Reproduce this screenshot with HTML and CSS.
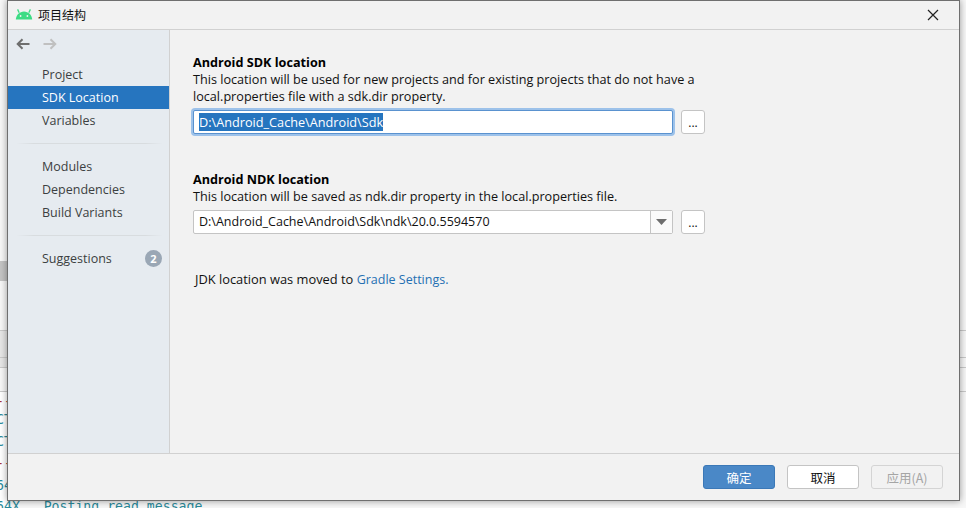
FILE: index.html
```html
<!DOCTYPE html>
<html lang="zh">
<head>
<meta charset="utf-8">
<title>项目结构</title>
<link rel="stylesheet" href="styles.css">
</head>
<body>
<div class="backdrop">
  <div class="bg-band band-a"></div>
  <div class="bg-band band-b"></div>
  <div class="bg-band band-c"></div>
  <div class="bg-line line-a"></div>
  <div class="bg-line line-b"></div>
  <div class="bg-line line-c"></div>
  <div class="bg-line line-d"></div>
  <span class="bg-code c1 red">--&gt;</span>
  <span class="bg-code c2 teal">CT</span>
  <span class="bg-code c3 teal">CT</span>
  <span class="bg-code c4 red">--&gt;</span>
  <span class="bg-code c5 teal">64</span>
  <span class="bg-code c6 teal">64X   Posting read message</span>
</div>
<div class="dialog">
  <header class="titlebar">
    <svg class="droid" width="18" height="12" viewBox="0 0 18 12">
      <path d="M.8 11.500C1.100 7 4.500 3.400 9 3.400s7.900 3.600 8.200 8.100Z" fill="#3ddc84"/>
      <path d="M4.200 4.800 2.600 1.400M13.800 4.800l1.600-3.400" stroke="#3ddc84" stroke-width="1.300" fill="none"/>
      <circle cx="5.600" cy="8" r=".9" fill="#f2f2f2"/>
      <circle cx="12.400" cy="8" r=".9" fill="#f2f2f2"/>
    </svg>
    <span class="title">项目结构</span>
    <svg class="close" width="12" height="12" viewBox="0 0 12 12">
      <path d="M1 1l10 10M11 1 1 11" stroke="#222" stroke-width="1.200" fill="none"/>
    </svg>
  </header>
  <div class="main">
    <nav class="side">
      <div class="arrows">
        <svg width="14" height="12" viewBox="0 0 14 12"><path d="M13.500 6H2M6.500 1.200 1.700 6l4.800 4.800" stroke="#6e6e6e" stroke-width="2" fill="none"/></svg>
        <svg width="14" height="12" viewBox="0 0 14 12"><path d="M.5 6H12M7.500 1.200 12.300 6l-4.800 4.800" stroke="#c0c0c0" stroke-width="2" fill="none"/></svg>
      </div>
      <ul class="group">
        <li>Project</li>
        <li class="active">SDK Location</li>
        <li>Variables</li>
      </ul>
      <ul class="group">
        <li>Modules</li>
        <li>Dependencies</li>
        <li>Build Variants</li>
      </ul>
      <ul class="group">
        <li class="with-badge">Suggestions<span class="badge">2</span></li>
      </ul>
    </nav>
    <section class="content">
      <div class="block sdk">
        <h2>Android SDK location</h2>
        <p>This location will be used for new projects and for existing projects that do not have a<br>local.properties file with a sdk.dir property.</p>
        <div class="field-row">
          <div class="input focused"><span class="selected">D:\Android_Cache\Android\Sdk</span></div>
          <button class="dots">...</button>
        </div>
      </div>
      <div class="block ndk">
        <h2>Android NDK location</h2>
        <p>This location will be saved as ndk.dir property in the local.properties file.</p>
        <div class="field-row">
          <div class="input combo">
            <span class="value">D:\Android_Cache\Android\Sdk\ndk\20.0.5594570</span>
            <span class="caret"><svg width="11" height="6" viewBox="0 0 11 6"><path d="M0 0h11L5.500 6Z" fill="#6e6e6e"/></svg></span>
          </div>
          <button class="dots">...</button>
        </div>
      </div>
      <p class="jdk">JDK location was moved to <a>Gradle Settings.</a></p>
    </section>
  </div>
  <footer class="footer">
    <button class="btn primary">确定</button>
    <button class="btn">取消</button>
    <button class="btn disabled">应用(A)</button>
  </footer>
</div>
</body>
</html>
```
FILE: styles.css
```css
* { box-sizing: border-box; }
html, body { margin: 0; height: 100%; overflow: hidden; }
body {
  position: relative;
  width: 966px;
  height: 508px;
  background: #f2f2f2;
  font-family: "Open Sans", "Noto Sans CJK SC", sans-serif;
  font-size: 12.5px;
  color: #1e1e1e;
}
.backdrop { position: absolute; inset: 0; background: #f7f7f7; }
.bg-band { position: absolute; left: 0; width: 8px; }
.band-a { top: 261px; height: 20px; background: #c4c4c4; }
.band-b { top: 331px; height: 36px; background: #e6e6e6; }
.band-c { top: 392px; height: 116px; background: #fff; }
.bg-line { position: absolute; left: 0; right: 0; height: 1px; background: #c9c9c9; }
.line-a { top: 330px; }
.line-b { top: 357px; }
.line-c { top: 367px; }
.line-d { top: 391px; }
.bg-code { position: absolute; left: -4px; font: 13.2px "DejaVu Sans Mono", monospace; white-space: pre; }
.red { color: #a33; }
.teal { color: #2a8a9a; }
.c1 { top: 394px; }
.c2 { top: 412px; }
.c3 { top: 434px; }
.c4 { top: 456px; }
.c5 { top: 478px; }
.c6 { top: 499px; }

.dialog {
  position: absolute;
  left: 7px;
  top: 0;
  width: 953px;
  height: 501px;
  display: flex;
  flex-direction: column;
  background: #f2f2f2;
  border: 1px solid #6f6f6f;
  box-shadow: 0 0 7px rgba(0, 0, 0, .4);
}
.titlebar {
  flex: none;
  height: 29px;
  display: flex;
  align-items: center;
  padding: 0 20px 0 7px;
  border-bottom: 1px solid #d1d1d1;
}
.droid { flex: none; margin-top: -2px; }
.title { margin-left: 5px; font-size: 12px; color: #111; }
.close { margin-left: auto; }
.main { flex: 1; display: flex; min-height: 0; }
.side {
  flex: none;
  width: 162px;
  background: #e6ebf0;
  border-right: 1px solid #d1d1d1;
  color: #3c3f41;
}
.arrows { display: flex; gap: 13px; padding: 8px 0 0 8px; height: 33px; }
.group { list-style: none; margin: 0 0 11px; padding: 0; }
.group + .group::before {
  content: "";
  display: block;
  height: 1px;
  margin: 0 6px 11px 8px;
  background: linear-gradient(90deg, #e6ebf0, #d8dcdf 12%, #d8dcdf 88%, #e6ebf0);
}
.group li { height: 23px; line-height: 23px; padding-left: 34px; }
.group li.active { background: #2675bf; color: #fff; }
.group li.with-badge { display: flex; align-items: center; justify-content: space-between; padding-right: 7px; }
.badge {
  width: 17px;
  height: 17px;
  border-radius: 50%;
  background: #9aa7b5;
  color: #fff;
  font-weight: 700;
  font-size: 11px;
  line-height: 17px;
  text-align: center;
}
.content { flex: 1; padding: 24px 0 0 23px; color: #111; font-size: 12.65px; }
.block h2 { margin: 0; font-size: 12.65px; line-height: 17px; font-weight: 700; color: #000; }
.block p { margin: 0; line-height: 17px; }
.field-row { display: flex; gap: 8px; align-items: center; margin-top: 5px; }
.input {
  width: 480px;
  height: 24px;
  background: #fff;
  border: 1px solid #c4c4c4;
  border-radius: 2px;
  padding-left: 5px;
  line-height: 22px;
  display: flex;
  font-size: 12.5px;
}
.input.focused { border: 1px solid #5a92cf; box-shadow: 0 0 0 2px #9dc2ea; }
.selected { background: #2675bf; color: #fff; height: 18px; line-height: 18px; margin-top: 2px; font-size: 12.7px; }
.value { flex: 1; }
.caret {
  width: 22px;
  border-left: 1px solid #c4c4c4;
  display: flex;
  align-items: center;
  justify-content: center;
  background: #fafafa;
}
.dots {
  width: 24px;
  height: 24px;
  border: 1px solid #c4c4c4;
  border-radius: 3px;
  background: #fff;
  font: 12px "Open Sans", sans-serif;
  padding: 0;
  color: #111;
}
.sdk { margin-bottom: 37px; }
.ndk { margin-bottom: 35px; }
.jdk { margin: 0 0 0 2px; line-height: 20px; font-size: 12.85px; }
.jdk a { color: #2470b3; font-size: 12.5px; }
.footer {
  flex: none;
  height: 47px;
  border-top: 1px solid #d1d1d1;
  display: flex;
  justify-content: flex-end;
  align-items: flex-start;
  gap: 12px;
  padding: 11px 16px 0 0;
}
.btn {
  width: 72px;
  height: 24px;
  border: 1px solid #c4c4c4;
  border-radius: 3px;
  background: #fff;
  font: 12.5px "Noto Sans CJK SC", sans-serif;
  padding: 0;
  color: #111;
}
.btn.primary { background: #4a88c7; border-color: #3b78b7; color: #fff; }
.btn.disabled { background: #f2f2f2; border-color: #d4d4d4; color: #a5a5a5; }
```
